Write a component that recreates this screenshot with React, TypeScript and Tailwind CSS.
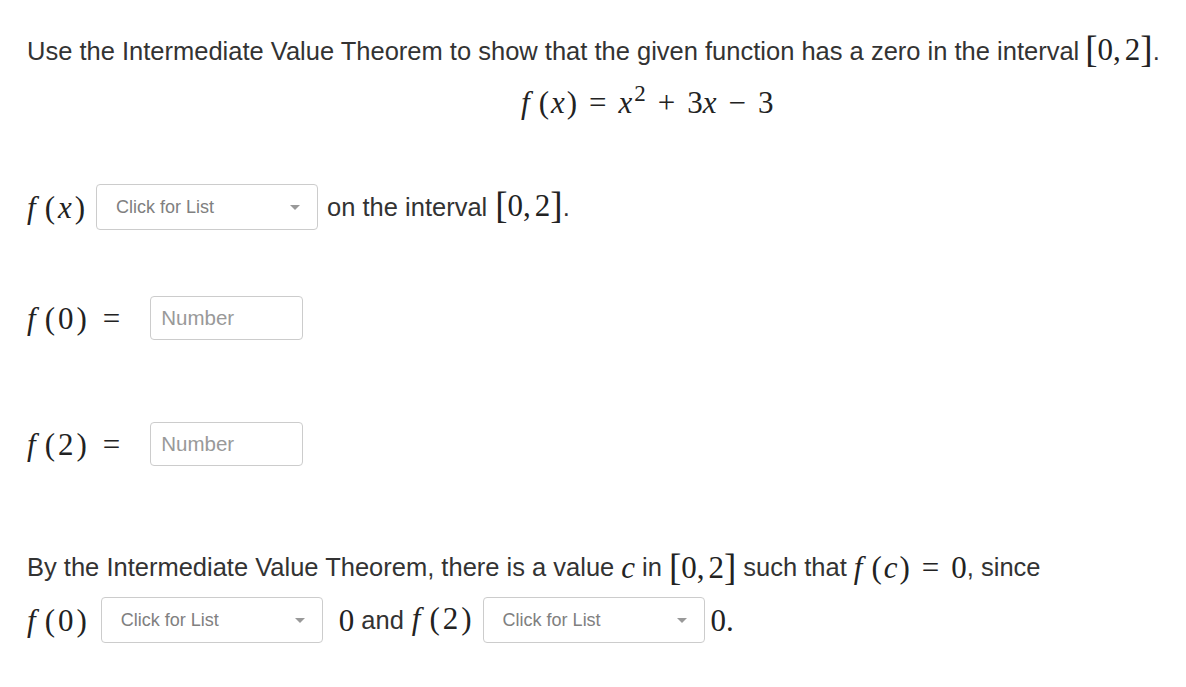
import React from "react";

const serif = "font-['Liberation_Serif','DejaVu_Serif',serif]";

function V({ children }: { children: React.ReactNode }) {
  return <span className="italic">{children}</span>;
}

function M({ children, className = "" }: { children: React.ReactNode; className?: string }) {
  return <span className={`${serif} text-[31px] leading-none text-[#222] whitespace-nowrap ${className}`}>{children}</span>;
}

function Op({ children }: { children: React.ReactNode }) {
  return <span className="mx-[12px]">{children}</span>;
}

function Interval() {
  return (
    <M>
      <span className="text-[37px] font-light align-[-2px]">[</span>0,<span className="ml-[4px]">2</span>
      <span className="text-[37px] font-light align-[-2px]">]</span>
    </M>
  );
}

function Fn({ arg }: { arg: React.ReactNode }) {
  return (
    <M>
      <V>f</V>
      <span className="ml-[9px]">(</span>
      <span className="mx-[3px]">{arg}</span>)
    </M>
  );
}

function Select() {
  return (
    <div className="flex h-[46px] w-[222px] items-center justify-between rounded-[4px] border border-[#cccccc] bg-white pl-[19px] pr-[17px]">
      <span className="text-[18px] text-[#808080]">Click for List</span>
      <span className="h-0 w-0 border-x-[5px] border-t-[5px] border-x-transparent border-t-[#999999]" />
    </div>
  );
}

function NumberInput() {
  return (
    <div className="flex h-[44px] w-[153px] items-center rounded-[4px] border border-[#cccccc] bg-white pl-[10px]">
      <span className="text-[20.5px] text-[#999999]">Number</span>
    </div>
  );
}

export default function App() {
  return (
    <div className="min-h-[687px] w-full bg-white px-[27px] pt-[33px] font-['Liberation_Sans',Arial,sans-serif] text-[25.5px] text-[#333333]">
      <div className="flex h-[36px] items-center gap-[6px] whitespace-nowrap">
        <span>Use the Intermediate Value Theorem to show that the given function has a zero in the interval</span>
        <span>
          <Interval />.
        </span>
      </div>

      <div className="mt-[15px] flex h-[36px] items-center pl-[494px]">
        <M>
          <V>f</V>
          <span className="ml-[9px]">(</span>
          <span className="mx-[2px]">
            <V>x</V>
          </span>
          )<Op>=</Op>
          <V>x</V>
          <sup className="ml-[2px] text-[23px]">2</sup>
          <Op>+</Op>3<V>x</V>
          <Op>−</Op>3
        </M>
      </div>

      <div className="mt-[64px] flex items-center">
        <Fn arg={<V>x</V>} />
        <div className="ml-[11px]">
          <Select />
        </div>
        <span className="ml-[9px]">on the interval</span>
        <span className="ml-[8px]">
          <Interval />.
        </span>
      </div>

      <div className="mt-[66px] flex items-center">
        <Fn arg="0" />
        <M className="ml-[16px]">=</M>
        <div className="ml-[30px]">
          <NumberInput />
        </div>
      </div>

      <div className="mt-[82px] flex items-center">
        <Fn arg="2" />
        <M className="ml-[16px]">=</M>
        <div className="ml-[30px]">
          <NumberInput />
        </div>
      </div>

      <div className="mt-[83px] flex h-[36px] items-center gap-[7px] whitespace-nowrap">
        <span>By the Intermediate Value Theorem, there is a value</span>
        <M>
          <V>c</V>
        </M>
        <span>in</span>
        <Interval />
        <span>such that</span>
        <M>
          <V>f</V>
          <span className="ml-[9px]">(</span>
          <span className="mx-[2px]">
            <V>c</V>
          </span>
          )<Op>=</Op>0
        </M>
        <span className="-ml-[7px]">, since</span>
      </div>

      <div className="mt-[12px] flex items-center">
        <Fn arg="0" />
        <div className="ml-[14px]">
          <Select />
        </div>
        <M className="ml-[16px]">0</M>
        <span className="ml-[7px]">and</span>
        <span className="ml-[8px]">
          <Fn arg="2" />
        </span>
        <div className="ml-[11px]">
          <Select />
        </div>
        <M className="ml-[6px]">0.</M>
      </div>
    </div>
  );
}
